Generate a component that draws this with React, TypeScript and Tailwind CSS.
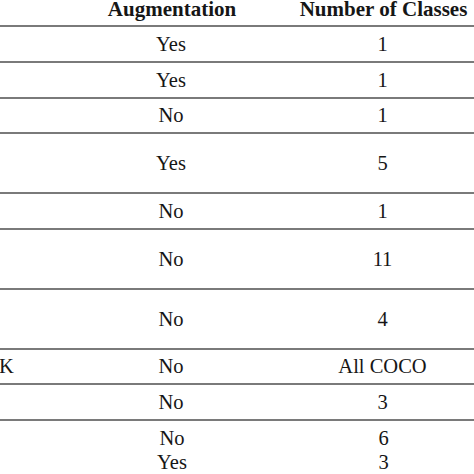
type Row = {
  left?: string;
  aug: string[];
  classes: string[];
  tall?: boolean;
  last?: boolean;
};

const ROWS: Row[] = [
  { aug: ["Yes"], classes: ["1"] },
  { aug: ["Yes"], classes: ["1"] },
  { aug: ["No"], classes: ["1"] },
  { aug: ["Yes"], classes: ["5"], tall: true },
  { aug: ["No"], classes: ["1"] },
  { aug: ["No"], classes: ["11"], tall: true },
  { aug: ["No"], classes: ["4"], tall: true },
  { left: "K", aug: ["No"], classes: ["All COCO"] },
  { aug: ["No"], classes: ["3"] },
  { aug: ["No", "Yes"], classes: ["6", "3"], last: true },
];

function TableRow({ row }: { row: Row }) {
  if (row.last) {
    return (
      <div className="flex border-t-2 border-[#7a7a7a] pt-[5px] leading-[24px]">
        <div className="w-[100px] text-left">{row.left}</div>
        <div className="w-[144px] text-center">
          {row.aug.map((a, i) => <div key={i}>{a}</div>)}
        </div>
        <div className="w-[279px] text-center">
          {row.classes.map((c, i) => <div key={i}>{c}</div>)}
        </div>
      </div>
    );
  }
  return (
    <div
      className={`flex items-center border-t-2 border-[#7a7a7a] leading-[24px] ${
        row.tall ? "h-[59.8px]" : "h-[35.8px]"
      }`}
    >
      <div className="w-[100px] text-left -ml-[1px]">{row.left}</div>
      <div className="w-[144px] text-center">{row.aug[0]}</div>
      <div className="w-[279px] text-center">{row.classes[0]}</div>
    </div>
  );
}

export default function App() {
  return (
    <div
      className="w-[474px] h-[474px] overflow-hidden bg-white text-[#161616] text-[20.5px]"
      style={{ fontFamily: '"Liberation Serif", "DejaVu Serif", serif' }}
    >
      <div className="w-[523px]">
        {/* header sits right at the top edge */}
        <div className="flex h-[25px] items-end pb-[4.5px] text-[21px] font-bold leading-[24px]">
          <div className="w-[100px]" />
          <div className="w-[144px] text-center whitespace-nowrap">Augmentation</div>
          <div className="w-[279px] text-center whitespace-nowrap">Number of Classes</div>
        </div>
        {ROWS.map((r, i) => (
          <TableRow key={i} row={r} />
        ))}
      </div>
    </div>
  );
}
